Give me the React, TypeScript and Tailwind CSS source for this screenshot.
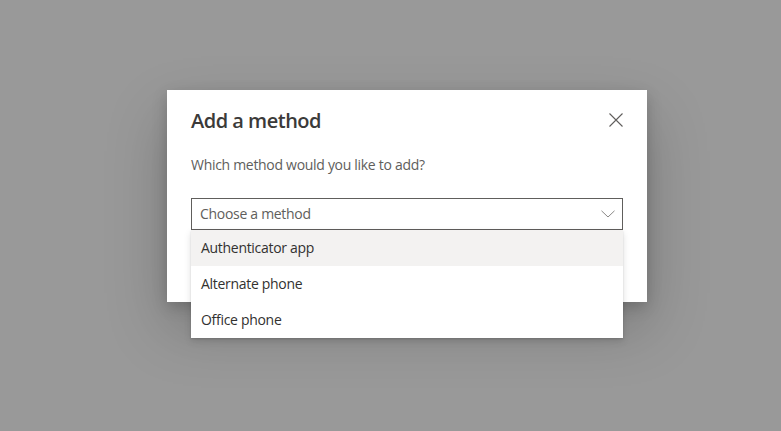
import React from "react";

const font = { fontFamily: '"Segoe UI", "Open Sans", sans-serif' };

export default function App() {
  return (
    <div
      className="w-[781px] h-[431px] bg-[#999999] pt-[90px] pl-[167px] overflow-hidden"
      style={font}
    >
      <div className="relative w-[480px] h-[212px] bg-white shadow-[0_25.6px_57.6px_rgba(0,0,0,0.22),0_4.8px_14.4px_rgba(0,0,0,0.18)] px-[24px] pt-[17px]">
        <div className="flex items-center justify-between h-[28px]">
          <div className="text-[20px] leading-[28px] font-semibold text-[#3b3a39] tracking-[-0.5px]">
            Add a method
          </div>
          <svg width="14" height="14" viewBox="0 0 14 14" className="-mt-[3px]">
            <path d="M0.5 0.5 L13.5 13.5 M13.5 0.5 L0.5 13.5" stroke="#605e5c" strokeWidth="1.1" fill="none" />
          </svg>
        </div>
        <div className="mt-[20px] text-[14px] leading-[20px] text-[#605e5c] tracking-[-0.3px]">
          Which method would you like to add?
        </div>
        <div className="relative mt-[23px]">
          <div className="flex items-center justify-between h-[32px] border border-[#605e5c] pl-[8px] pr-[7px]">
            <span className="text-[14px] leading-[20px] text-[#605e5c] tracking-[-0.3px]">Choose a method</span>
            <svg width="14" height="8" viewBox="0 0 14 8">
              <path d="M0.5 0.8 L7 7 L13.5 0.8" stroke="#8a8886" strokeWidth="1" fill="none" />
            </svg>
          </div>
          <div className="absolute left-0 right-0 top-[32px] bg-white shadow-[0_3.2px_7.2px_rgba(0,0,0,0.132),0_0.6px_1.8px_rgba(0,0,0,0.108)] z-10">
            {["Authenticator app", "Alternate phone", "Office phone"].map((t, i) => (
              <div
                key={t}
                className={`h-[36px] flex items-center pl-[10px] pb-[1px] text-[14px] text-[#323130] tracking-[-0.3px] ${
                  i === 0 ? "bg-[#f3f2f1]" : "bg-white"
                }`}
              >
                {t}
              </div>
            ))}
          </div>
        </div>
      </div>
    </div>
  );
}
